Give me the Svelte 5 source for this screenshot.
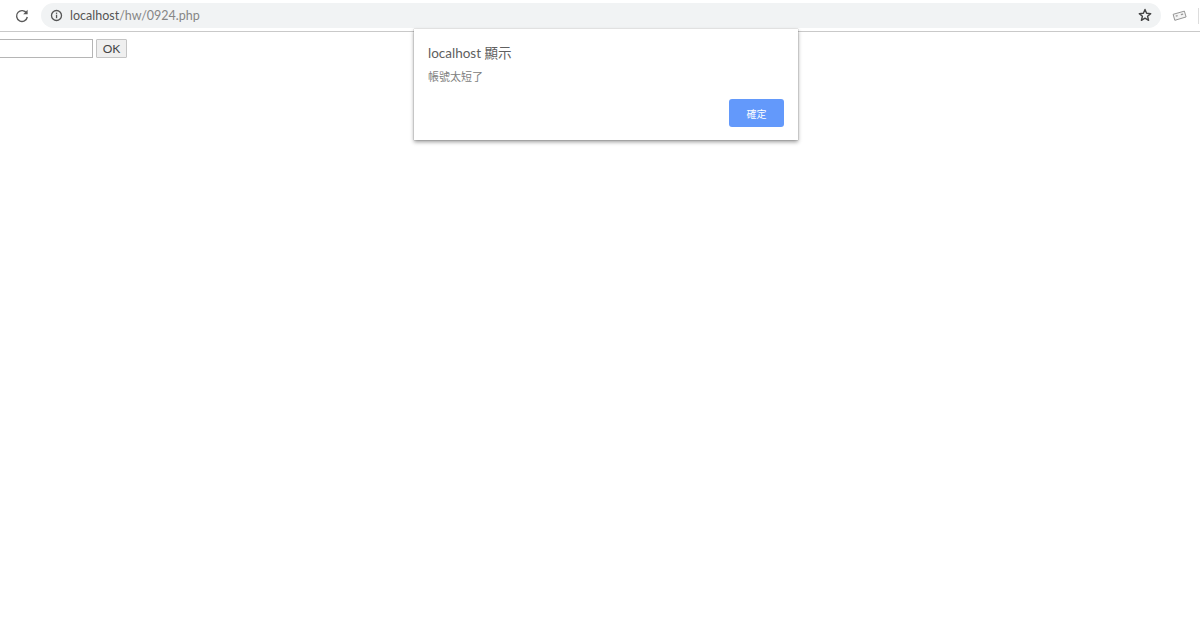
<script>
  let account = $state("");
</script>

<div class="page">
  <header class="toolbar">
    <button class="reload" aria-label="reload">
      <svg width="16" height="16" viewBox="0 0 16 16">
        <path d="M12.6 5.2A5.4 5.4 0 1 0 13.3 9" fill="none" stroke="#5a5a5a" stroke-width="1.4" />
        <path d="M13.6 1.8v4.4H9.2z" fill="#5a5a5a" />
      </svg>
    </button>
    <div class="omnibox">
      <svg class="info" width="13" height="13" viewBox="0 0 13 13">
        <circle cx="6.5" cy="6.5" r="5" fill="none" stroke="#555" stroke-width="1.3" />
        <rect x="5.9" y="5.7" width="1.3" height="3.5" fill="#555" />
        <rect x="5.9" y="3.6" width="1.3" height="1.3" fill="#555" />
      </svg>
      <span class="url"><span class="host">localhost</span>/hw/0924.php</span>
      <svg class="star" width="16" height="16" viewBox="0 0 16 16">
        <path d="M8 2.4l1.6 3.8 4.1.4-3.1 2.7 1 4L8 11.2l-3.6 2.1 1-4-3.1-2.7 4.1-.4z" fill="none" stroke="#444" stroke-width="1.4" stroke-linejoin="round" />
      </svg>
    </div>
    <svg class="ext" width="15" height="12" viewBox="0 0 16 12">
      <path d="M1.2 4.2l12-3.4 1.8 6.2-12 3.6z" fill="#f4f4f4" stroke="#8f8f8f" stroke-width="1" />
      <path d="M4 6.2l2-.6M9.5 4.6l2.4-.7" stroke="#9a9a9a" stroke-width="1.4" />
    </svg>
    <span class="divider"></span>
  </header>

  <form class="login" onsubmit={(e) => e.preventDefault()}>
    <input type="text" bind:value={account} />
    <button class="ok">OK</button>
  </form>

  <div class="alert" role="alertdialog">
    <h1>localhost 顯示</h1>
    <p>帳號太短了</p>
    <div class="actions">
      <button class="confirm">確定</button>
    </div>
  </div>
</div>

<style>
  :global(body) {
    margin: 0;
    background: #fff;
    font-family: "Lato", "Liberation Sans", "Noto Sans CJK TC", sans-serif;
  }

  .page {
    position: relative;
    width: 1200px;
    height: 630px;
    overflow: hidden;
    background: #fff;
  }

  .toolbar {
    display: flex;
    align-items: center;
    height: 31px;
    border-bottom: 1px solid #c9c9c9;
  }

  .reload {
    display: flex;
    margin-left: 14px;
    padding: 0;
    border: 0;
    background: none;
  }

  .omnibox {
    display: flex;
    align-items: center;
    width: 1120px;
    height: 25px;
    margin-left: 11px;
    margin-top: -1px;
    border-radius: 13px;
    background: #f1f3f4;
  }

  .info {
    margin-left: 9px;
  }

  .url {
    margin-left: 7px;
    font-size: 12.5px;
    color: #868686;
  }

  .host {
    color: #555;
  }

  .star {
    margin-left: auto;
    margin-right: 8px;
  }

  .ext {
    margin-left: 11px;
  }

  .divider {
    width: 1px;
    height: 16px;
    margin-left: 11px;
    background: #ddd;
  }

  .login {
    display: flex;
    align-items: stretch;
    gap: 3px;
    height: 19px;
    margin: 7px 0 0 -59px;
  }

  .login input {
    box-sizing: border-box;
    width: 152px;
    height: 19px;
    padding: 0;
    border: 1px solid #b5b5b5;
    background: #fff;
  }

  .ok {
    width: 31px;
    height: 19px;
    padding: 0;
    border: 1px solid #c4c4c4;
    border-radius: 1px;
    background: #efefef;
    font: 12px "Lato", "Liberation Sans", sans-serif;
    color: #444;
  }

  .alert {
    position: absolute;
    left: 414px;
    top: 29px;
    box-sizing: border-box;
    width: 384px;
    height: 111px;
    padding: 15px 14px 0;
    background: #fff;
    box-shadow: 0 0 1px rgba(0, 0, 0, 0.45), 0 2px 4px rgba(0, 0, 0, 0.4);
  }

  .alert h1 {
    margin: 0;
    font-size: 13.5px;
    line-height: 18px;
    font-weight: 400;
    color: #606060;
    font-family: "Lato", "Noto Sans CJK TC", sans-serif;
  }

  .alert p {
    margin: 7px 0 0;
    font-size: 11px;
    line-height: 16px;
    color: #808080;
  }

  .actions {
    display: flex;
    justify-content: flex-end;
    margin-top: 14px;
  }

  .confirm {
    width: 55px;
    height: 28px;
    padding: 0;
    border: 0;
    border-radius: 3px;
    background: #6399fb;
    color: #fff;
    font: 10px "Noto Sans CJK TC", sans-serif;
  }
</style>
